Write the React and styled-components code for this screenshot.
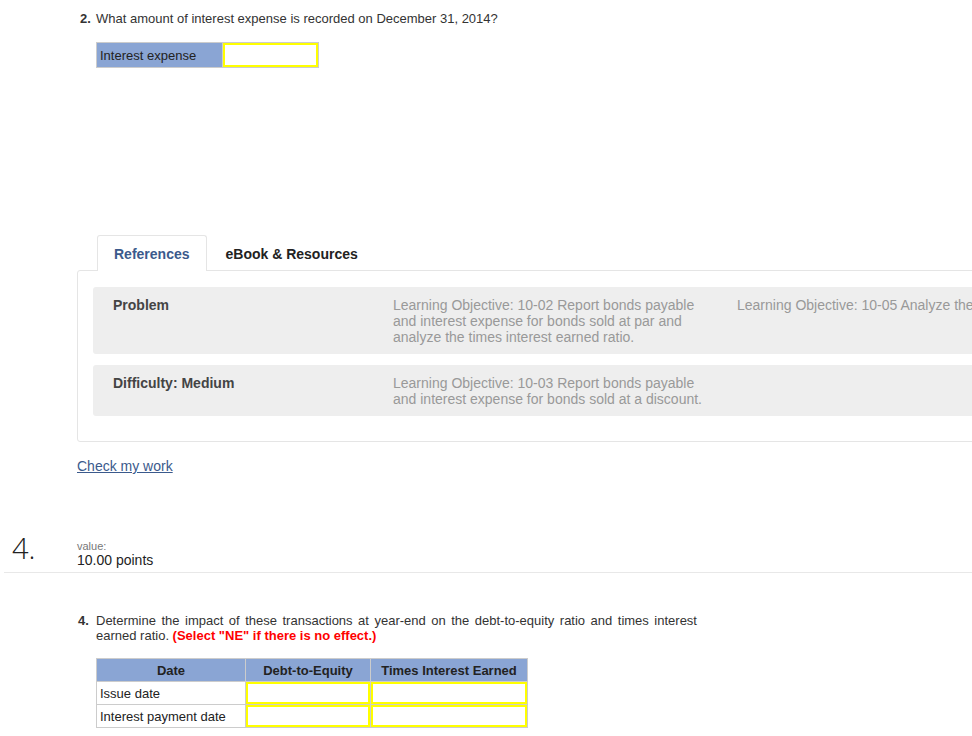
import React from 'react'
import styled, { createGlobalStyle } from 'styled-components'

const GlobalStyle = createGlobalStyle`
  html, body {
    margin: 0;
    padding: 0;
    background: #fff;
    overflow-x: hidden;
  }
  body {
    font-family: "Liberation Sans", Arial, sans-serif;
    color: #333;
  }
`

const Page = styled.div`
  width: 972px;
  overflow: hidden;
  padding-top: 11px;
  padding-bottom: 8px;
`

const Question = styled.div`
  margin-left: ${p => p.indent || 80}px;
  width: ${p => p.width || 'auto'};
  font-size: 13px;
  line-height: 15px;
  color: #333;
  text-align: ${p => p.justify ? 'justify' : 'left'};
  display: flex;
`

const QNum = styled.b`
  flex: 0 0 ${p => p.w || 16}px;
  color: #333;
`

const QText = styled.p`
  margin: 0;
  flex: 1;
`

const Warn = styled.b`
  color: #f00;
`

const GridTable = styled.table`
  border-collapse: collapse;
  margin-left: 96px;
  margin-top: ${p => p.top || 0}px;
  font-size: 13px;
  color: #222;
`

const Cell = styled.td`
  border: 1px solid #ccc;
  height: ${p => p.h || 21}px;
  width: ${p => p.w}px;
  padding: 0 3px;
  box-sizing: border-box;
  background: ${p => p.blue ? '#8aa5d4' : '#fff'};
  ${p => p.input && `box-shadow: inset 0 0 0 2px #ffff00; padding: 0;`}
`

const HeadCell = styled.th`
  border: 1px solid #ccc;
  height: 23px;
  width: ${p => p.w}px;
  box-sizing: border-box;
  background: #8aa5d4;
  font-weight: bold;
  text-align: center;
  color: #222;
`

const Tabs = styled.div`
  margin-top: ${p => p.top}px;
  margin-left: 77px;
`

const TabList = styled.div`
  display: flex;
  padding-left: 20px;
  position: relative;
  z-index: 1;
`

const Tab = styled.div`
  height: 36px;
  box-sizing: border-box;
  padding: 0 ${p => p.active ? 16 : 18}px;
  display: flex;
  align-items: center;
  font-size: 14px;
  font-weight: bold;
  color: ${p => p.active ? '#3b5a8c' : '#222'};
  border: 1px solid ${p => p.active ? '#e5e5e5' : 'transparent'};
  border-bottom: none;
  border-radius: 3px 3px 0 0;
  background: ${p => p.active ? '#fff' : 'transparent'};
  margin-bottom: -1px;
`

const Panel = styled.div`
  width: 1100px;
  border: 1px solid #e5e5e5;
  border-radius: 3px;
  padding: 16px 15px 25px;
  display: flex;
  flex-direction: column;
  gap: 11px;
`

const RefRow = styled.div`
  background: #eee;
  border-radius: 3px;
  padding: 10px 0 9px 20px;
  display: grid;
  grid-template-columns: 280px 344px 1fr;
  font-size: 14px;
  line-height: 16px;
`

const RefLabel = styled.div`
  font-weight: bold;
  color: #444;
`

const RefText = styled.div`
  color: #999;
  padding-right: ${p => p.pr || 0}px;
  white-space: ${p => p.nowrap ? 'nowrap' : 'normal'};
`

const CheckLink = styled.a`
  display: inline-block;
  margin: 16px 0 0 77px;
  font-size: 14px;
  color: #3b5a8c;
  text-decoration: underline;
  cursor: pointer;
`

const ItemHeader = styled.div`
  margin-top: 58px;
  margin-left: 4px;
  display: flex;
  align-items: flex-end;
  border-bottom: 1px solid #e8e8e8;
  padding-bottom: 4px;
`

const ItemNum = styled.div`
  width: 73px;
  padding-left: 8px;
  padding-bottom: 5px;
  box-sizing: border-box;
  font-family: "Open Sans", "Liberation Sans", sans-serif;
  font-weight: 300;
  font-size: 29px;
  line-height: 30px;
  color: #222;
`

const Points = styled.div`
  display: flex;
  flex-direction: column;
`

const PointsLabel = styled.span`
  font-size: 11px;
  line-height: 12px;
  color: #777;
`

const PointsValue = styled.span`
  font-size: 14px;
  line-height: 16px;
  color: #222;
`

const Gap = styled.div`
  height: ${p => p.h}px;
`

export default function App() {
  return (
    <Page>
      <GlobalStyle />
      <Question>
        <QNum>2.</QNum>
        <QText>What amount of interest expense is recorded on December 31, 2014?</QText>
      </Question>

      <GridTable top={16}>
        <tbody>
          <tr>
            <Cell blue w={126} h={25}>Interest expense</Cell>
            <Cell input w={96} h={25}></Cell>
          </tr>
        </tbody>
      </GridTable>

      <Tabs top={167}>
        <TabList>
          <Tab active>References</Tab>
          <Tab>eBook &amp; Resources</Tab>
        </TabList>
        <Panel>
          <RefRow>
            <RefLabel>Problem</RefLabel>
            <RefText pr={20}>Learning Objective: 10-02 Report bonds payable and interest expense for bonds sold at par and analyze the times interest earned ratio.</RefText>
            <RefText nowrap>Learning Objective: 10-05 Analyze the debt-to-equity ratio.</RefText>
          </RefRow>
          <RefRow>
            <RefLabel>Difficulty: Medium</RefLabel>
            <RefText pr={20}>Learning Objective: 10-03 Report bonds payable and interest expense for bonds sold at a discount.</RefText>
            <RefText></RefText>
          </RefRow>
        </Panel>
      </Tabs>

      <CheckLink>Check my work</CheckLink>

      <ItemHeader>
        <ItemNum>4.</ItemNum>
        <Points>
          <PointsLabel>value:</PointsLabel>
          <PointsValue>10.00 points</PointsValue>
        </Points>
      </ItemHeader>

      <Gap h={40} />

      <Question indent={78} width="619px" justify>
        <QNum w={18}>4.</QNum>
        <QText>
          Determine the impact of these transactions at year-end on the debt-to-equity ratio and times interest earned ratio. <Warn>(Select "NE" if there is no effect.)</Warn>
        </QText>
      </Question>

      <GridTable top={15}>
        <thead>
          <tr>
            <HeadCell w={149}>Date</HeadCell>
            <HeadCell w={125}>Debt-to-Equity</HeadCell>
            <HeadCell w={157}>Times Interest Earned</HeadCell>
          </tr>
        </thead>
        <tbody>
          <tr>
            <Cell w={149} h={23}>Issue date</Cell>
            <Cell input w={125} h={23}></Cell>
            <Cell input w={157} h={23}></Cell>
          </tr>
          <tr>
            <Cell w={149} h={23}>Interest payment date</Cell>
            <Cell input w={125} h={23}></Cell>
            <Cell input w={157} h={23}></Cell>
          </tr>
        </tbody>
      </GridTable>
    </Page>
  )
}
